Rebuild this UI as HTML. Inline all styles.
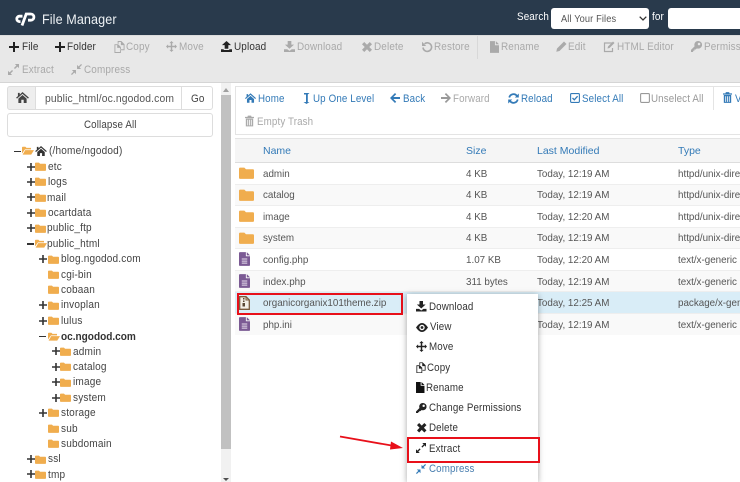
<!DOCTYPE html>
<html><head><meta charset="utf-8">
<style>
html,body{margin:0;padding:0;width:740px;height:482px;overflow:hidden}
body{position:relative;background:#fff;font-family:"Liberation Sans",sans-serif;font-size:11px;color:#333}
#w{position:absolute;left:0;top:0;width:740px;height:482px;overflow:hidden;filter:blur(.3px)}
#w div,#w span,#w svg{position:absolute;box-sizing:border-box}
.t{white-space:nowrap;line-height:14px;font-family:"Liberation Sans",sans-serif;font-size:11.3px;letter-spacing:.15px;transform:scaleX(.88);transform-origin:0 50%}
.tb{color:#333}.dis{color:#a9a9a9}.bl{color:#337ab7}
.a{white-space:nowrap;line-height:14px;font-family:"Liberation Sans",sans-serif;font-size:10.5px;color:#555;margin-top:.5px;transform:scaleX(.935);transform-origin:0 50%}
.h{color:#337ab7;transform:none}
.tr{color:#444;font-size:11.3px;letter-spacing:.2px;transform:scaleX(.89)}
.m{color:#333;font-size:11.1px;letter-spacing:.15px}
</style></head><body>
<svg width="0" height="0" style="position:absolute">
<defs>
<symbol id="fo" viewBox="0 0 14 11"><path d="M0 1.5Q0 .5 1 .5H5L6.5 2H13Q14 2 14 3V10Q14 11 13 11H1Q0 11 0 10Z" fill="#f0ad4e"/></symbol>
<symbol id="op" viewBox="0 0 16 11"><path d="M0 1.5Q0 .5 1 .5H4.5L6 2H12V4H4L0 9.5Z" fill="#f0ad4e"/><path d="M4.3 5H16L12.3 11H.8Z" fill="#f0ad4e"/></symbol>
<symbol id="pl" viewBox="0 0 10 10"><path d="M4 0H6V4H10V6H6V10H4V6H0V4H4Z"/></symbol>
<symbol id="home" viewBox="0 0 14 12"><path d="M7 0L14 6.2 13 7.2 7 2 1 7.2 0 6.2 2 4.500V1H4V2.800ZM2.500 7.200L7 3.300 11.500 7.200V12H8.300V8.500H5.700V12H2.500Z"/></symbol>
<symbol id="php" viewBox="0 0 12 15"><path d="M0 1Q0 0 1 0H7.500V4.500H12V14Q12 15 11 15H1Q0 15 0 14Z" fill="#7b5a94"/><path d="M8.500 0L12 3.500H8.500Z" fill="#7b5a94"/><path d="M3 7H9V8H3ZM3 9.300H9V10.300H3ZM3 11.500H9V12.500H3Z" fill="#e8e0ee"/></symbol>
<symbol id="dl" viewBox="0 0 12 12"><path d="M4 0H8V4H11L6 8.500 1 4H4ZM0 9H3.500L6 10.800 8.500 9H12V12H0Z"/></symbol>
<symbol id="ul" viewBox="0 0 12 12"><path d="M6 0L11 4.500H8V8.500H4V4.500H1ZM0 9H3V9.800H9V9H12V12H0Z"/></symbol>
<symbol id="mv" viewBox="0 0 12 12"><path d="M6 0L8.300 2.300H6.800V5.200H9.700V3.700L12 6 9.700 8.300V6.800H6.800V9.700H8.300L6 12 3.700 9.700H5.200V6.800H2.300V8.300L0 6 2.300 3.700V5.200H5.200V2.300H3.700Z"/></symbol>
<symbol id="cp" viewBox="0 0 12 13"><path d="M4 0H8L11.500 3.500V10H7V9H10.500V4.500H7.500V1H5V3H4ZM.5 3.500H4.500L7.500 6.500V13H.5ZM1.500 4.500V12H6.500V7.500H3.500V4.500Z" fill-rule="evenodd"/></symbol>
<symbol id="ex" viewBox="0 0 12 12"><path d="M7.500 0H12V4.500L10.300 2.800 7.600 5.500 6.500 4.400 9.200 1.700ZM5.500 7.600L2.800 10.300 4.500 12H0V7.500L1.700 9.200 4.400 6.500Z"/></symbol>
<symbol id="cm" viewBox="0 0 12 12"><path d="M11 0L12 1 9.300 3.700 11 5.400H6.600V1L8.300 2.700ZM5.400 6.600V11L3.700 9.300 1 12 0 11 2.700 8.300 1 6.600Z"/></symbol>
<symbol id="x" viewBox="0 0 11 11"><path d="M2.500 0L5.500 3 8.500 0 11 2.500 8 5.500 11 8.500 8.500 11 5.500 8 2.500 11 0 8.500 3 5.500 0 2.500Z"/></symbol>
<symbol id="rn" viewBox="0 0 10 13"><path d="M0 0H5.500V4.500H10V13H0ZM6.500 0L10 3.500H6.500Z"/></symbol>
<symbol id="key" viewBox="0 0 13 13"><path d="M8.500 0A4.500 4.500 0 1 1 7 8.700L5.500 10H4V11.500H2.500V13H0V10.500L4.300 6.200A4.500 4.500 0 0 1 8.500 0ZM9.500 2A1.500 1.500 0 1 0 9.500 5 1.500 1.500 0 0 0 9.500 2Z" fill-rule="evenodd"/></symbol>
<symbol id="tr" viewBox="0 0 11 13"><path d="M3.500 0H7.500L8 1.500H11V3H0V1.500H3ZM1 3.500H10V13H1ZM2.800 5V11.800H3.800V5ZM5 5V11.800H6V5ZM7.200 5V11.800H8.200V5Z" fill-rule="evenodd"/></symbol>
</defs></svg>
<div id="w">
<!-- header -->
<div style="left:0;top:0;width:740px;height:35px;background:#293a4c"></div>
<svg style="left:14px;top:12px" width="22" height="14" viewBox="0 0 22 14"><path d="M8.500 4.200H5.500A2.700 2.700 0 0 0 5.500 9.600H6.500" fill="none" stroke="#fff" stroke-width="2.800"/><path d="M8 13.500L12.200 2H16.800A3 3 0 0 1 16.800 8.200H14" fill="none" stroke="#fff" stroke-width="2.800"/></svg>
<div class="t" style="left:42px;top:11px;font-size:14px;line-height:16px;letter-spacing:.1px;color:#eef2f5;transform:scaleX(.9)">File Manager</div>
<div class="t" style="left:517px;top:10px;color:#fff;font-size:11.2px">Search</div>
<div style="left:551px;top:8px;width:98px;height:20.500px;background:#fff;border-radius:3px"></div>
<div class="t" style="left:561px;top:12px;font-size:10.500px;color:#555">All Your Files</div>
<svg style="left:639px;top:16px" width="8" height="5" viewBox="0 0 8 5"><path d="M.7.7L4 4 7.300.7" fill="none" stroke="#333" stroke-width="1.300"/></svg>
<div class="t" style="left:652px;top:10px;color:#fff">for</div>
<div style="left:668px;top:8px;width:72px;height:20.500px;background:#fff;border-radius:3px 0 0 3px"></div>

<!-- toolbar -->
<div style="left:0;top:35px;width:740px;height:48px;background:#e8e8e8;border-top:1px solid #dcdcdc;border-bottom:1px solid #d5d5d5"></div>
<svg style="left:9px;top:42px" width="10" height="10" fill="#222"><use href="#pl"/></svg><div class="t tb" style="left:21.500px;top:40px">File</div>
<svg style="left:55px;top:42px" width="10" height="10" fill="#222"><use href="#pl"/></svg><div class="t tb" style="left:67px;top:40px">Folder</div>
<svg style="left:114px;top:41px" width="11" height="12" fill="#aaa"><use href="#cp"/></svg><div class="t dis" style="left:125.500px;top:40px">Copy</div>
<svg style="left:166px;top:41px" width="11" height="11" fill="#aaa"><use href="#mv"/></svg><div class="t dis" style="left:178.500px;top:40px">Move</div>
<svg style="left:221px;top:41px" width="11" height="11" fill="#222"><use href="#ul"/></svg><div class="t tb" style="left:234px;top:40px">Upload</div>
<svg style="left:284px;top:41px" width="11" height="11" fill="#aaa"><use href="#dl"/></svg><div class="t dis" style="left:297px;top:40px">Download</div>
<svg style="left:362px;top:42px" width="10" height="10" fill="#aaa"><use href="#x"/></svg><div class="t dis" style="left:374px;top:40px">Delete</div>
<svg style="left:421px;top:41px" width="12" height="12" viewBox="0 0 12 12"><path d="M2 6.500A4.300 4.300 0 1 0 3.500 2.800" fill="none" stroke="#aaa" stroke-width="1.600"/><path d="M1 .8V5H5.200Z" fill="#aaa"/></svg><div class="t dis" style="left:433.500px;top:40px">Restore</div>
<div style="left:477px;top:36px;width:1px;height:23px;background:#d8d8d8"></div>
<svg style="left:490px;top:41px" width="9" height="12" fill="#aaa"><use href="#rn"/></svg><div class="t dis" style="left:500.500px;top:40px">Rename</div>
<svg style="left:556px;top:41px" width="11" height="11" viewBox="0 0 11 11"><path d="M8 .5L10.500 3 3.500 10 .3 10.700 1 7.500Z" fill="#aaa"/></svg><div class="t dis" style="left:568px;top:40px">Edit</div>
<svg style="left:603px;top:41px" width="12" height="12" viewBox="0 0 12 12"><path d="M9 2H1.500V10.500H9.500V7" fill="none" stroke="#aaa" stroke-width="1.200"/><path d="M10 .5L11.500 2 6.500 7 4.500 7.500 5 5.500Z" fill="#aaa"/></svg><div class="t dis" style="left:617px;top:40px">HTML Editor</div>
<svg style="left:691px;top:41px" width="11" height="11" fill="#aaa"><use href="#key"/></svg><div class="t dis" style="left:704px;top:40px">Permissions</div>
<svg style="left:8px;top:64px" width="11" height="11" fill="#aaa"><use href="#ex"/></svg><div class="t dis" style="left:21.500px;top:63px">Extract</div>
<svg style="left:71px;top:64px" width="11" height="11" fill="#aaa"><use href="#cm"/></svg><div class="t dis" style="left:83.500px;top:63px">Compress</div>

<!-- left top -->
<div style="left:7px;top:86px;width:206px;height:24px;border:1px solid #ddd;border-radius:3px;background:#fff"></div>
<div style="left:7px;top:86px;width:29px;height:24px;background:#eee;border:1px solid #ddd;border-radius:3px 0 0 3px"></div>
<svg style="left:15.500px;top:92px" width="13" height="11" fill="#444"><use href="#home"/></svg>
<div class="t" style="left:44.500px;top:91.500px;color:#555;font-size:11.100px;transform:scaleX(.93)">public_html/oc.ngodod.com</div>
<div style="left:181px;top:87px;width:1px;height:22px;background:#ddd"></div>
<div class="t" style="left:190.500px;top:91.500px;color:#444;font-size:11.300px">Go</div>
<div style="left:7px;top:113px;width:206px;height:24px;border:1px solid #ddd;border-radius:3px;background:#fff"></div>
<div class="t" style="left:83.500px;top:118px;color:#444;font-size:11.100px">Collapse All</div>

<!-- tree -->
<div style="left:14px;top:150.500px;width:7px;height:1.800px;background:#333"></div>
<svg style="left:22px;top:146px" width="12" height="9"><use href="#op"/></svg>
<svg style="left:35px;top:145.500px" width="12" height="10" fill="#333"><use href="#home"/></svg>
<div class="t tr" style="left:48.500px;top:144px">(/home/ngodod)</div>

<svg style="left:26.500px;top:162.500px" width="8" height="8" fill="#333"><use href="#pl"/></svg><svg style="left:34.500px;top:161.500px" width="11" height="9"><use href="#fo"/></svg><div class="t tr" style="left:47.500px;top:159.500px">etc</div>
<svg style="left:26.500px;top:178px" width="8" height="8" fill="#333"><use href="#pl"/></svg><svg style="left:34.500px;top:177px" width="11" height="9"><use href="#fo"/></svg><div class="t tr" style="left:47.500px;top:175px">logs</div>
<svg style="left:26.500px;top:193px" width="8" height="8" fill="#333"><use href="#pl"/></svg><svg style="left:34.500px;top:192.500px" width="11" height="9"><use href="#fo"/></svg><div class="t tr" style="left:46.500px;top:190.500px">mail</div>
<svg style="left:26.500px;top:209px" width="8" height="8" fill="#333"><use href="#pl"/></svg><svg style="left:34.500px;top:208px" width="11" height="9"><use href="#fo"/></svg><div class="t tr" style="left:47.500px;top:206px">ocartdata</div>
<svg style="left:26.500px;top:224px" width="8" height="8" fill="#333"><use href="#pl"/></svg><svg style="left:34.500px;top:223.500px" width="11" height="9"><use href="#fo"/></svg><div class="t tr" style="left:46.500px;top:221px">public_ftp</div>
<div style="left:26.500px;top:243px;width:7px;height:1.800px;background:#333"></div><svg style="left:35px;top:239px" width="12" height="9"><use href="#op"/></svg><div class="t tr" style="left:46.500px;top:236.500px">public_html</div>

<svg style="left:39px;top:255px" width="8" height="8" fill="#333"><use href="#pl"/></svg><svg style="left:47.500px;top:254.500px" width="11" height="9"><use href="#fo"/></svg><div class="t tr" style="left:60.500px;top:252px">blog.ngodod.com</div>
<svg style="left:47.500px;top:270px" width="11" height="9"><use href="#fo"/></svg><div class="t tr" style="left:60.500px;top:267.500px">cgi-bin</div>
<svg style="left:47.500px;top:285px" width="11" height="9"><use href="#fo"/></svg><div class="t tr" style="left:60.500px;top:283px">cobaan</div>
<svg style="left:39px;top:301px" width="8" height="8" fill="#333"><use href="#pl"/></svg><svg style="left:47.500px;top:300.500px" width="11" height="9"><use href="#fo"/></svg><div class="t tr" style="left:60.500px;top:298px">invoplan</div>
<svg style="left:39px;top:316.500px" width="8" height="8" fill="#333"><use href="#pl"/></svg><svg style="left:47.500px;top:315.500px" width="11" height="9"><use href="#fo"/></svg><div class="t tr" style="left:60.500px;top:313.500px">lulus</div>
<div style="left:39px;top:335.500px;width:7px;height:1.800px;background:#333"></div><svg style="left:47.500px;top:331.500px" width="12" height="9"><use href="#op"/></svg><div class="t tr" style="left:60.500px;top:329.500px;font-weight:bold;letter-spacing:0;color:#333">oc.ngodod.com</div>

<svg style="left:51.500px;top:347px" width="8" height="8" fill="#333"><use href="#pl"/></svg><svg style="left:60px;top:346.500px" width="11" height="9"><use href="#fo"/></svg><div class="t tr" style="left:73px;top:344.500px">admin</div>
<svg style="left:51.500px;top:363px" width="8" height="8" fill="#333"><use href="#pl"/></svg><svg style="left:60px;top:362px" width="11" height="9"><use href="#fo"/></svg><div class="t tr" style="left:73px;top:360px">catalog</div>
<svg style="left:51.500px;top:378px" width="8" height="8" fill="#333"><use href="#pl"/></svg><svg style="left:60px;top:377.500px" width="11" height="9"><use href="#fo"/></svg><div class="t tr" style="left:73px;top:375px">image</div>
<svg style="left:51.500px;top:393.500px" width="8" height="8" fill="#333"><use href="#pl"/></svg><svg style="left:60px;top:393px" width="11" height="9"><use href="#fo"/></svg><div class="t tr" style="left:73px;top:390.500px">system</div>

<svg style="left:39px;top:409px" width="8" height="8" fill="#333"><use href="#pl"/></svg><svg style="left:47.500px;top:408px" width="11" height="9"><use href="#fo"/></svg><div class="t tr" style="left:60.500px;top:406px">storage</div>
<svg style="left:47.500px;top:423.500px" width="11" height="9"><use href="#fo"/></svg><div class="t tr" style="left:60.500px;top:421.500px">sub</div>
<svg style="left:47.500px;top:438.500px" width="11" height="9"><use href="#fo"/></svg><div class="t tr" style="left:60.500px;top:436.500px">subdomain</div>
<svg style="left:26.500px;top:455px" width="8" height="8" fill="#333"><use href="#pl"/></svg><svg style="left:34.500px;top:454.500px" width="11" height="9"><use href="#fo"/></svg><div class="t tr" style="left:47.500px;top:452px">ssl</div>
<svg style="left:26.500px;top:470px" width="8" height="8" fill="#333"><use href="#pl"/></svg><svg style="left:34.500px;top:469.500px" width="11" height="9"><use href="#fo"/></svg><div class="t tr" style="left:47.500px;top:467.500px">tmp</div>

<!-- scrollbar -->
<div style="left:221px;top:83px;width:10px;height:399px;background:#f1f1f1"></div>
<div style="left:221px;top:95px;width:10px;height:354px;background:#c1c1c1"></div>
<svg style="left:223px;top:88px" width="6" height="4"><path d="M3 0L6 4H0Z" fill="#a0a0a0"/></svg>
<svg style="left:223px;top:478px" width="6" height="3"><path d="M0 0H6L3 3Z" fill="#505050"/></svg>

<!-- right top bar -->
<div style="left:234.500px;top:86px;width:506px;height:49px;border:1px solid #e4e4e4;border-right:0;background:#fff"></div>
<svg style="left:245px;top:93px" width="11" height="10" fill="#337ab7"><use href="#home"/></svg><div class="t bl" style="left:258px;top:91.500px;font-size:11.100px">Home</div>
<svg style="left:303px;top:92.500px" width="7" height="11" viewBox="0 0 7 11"><path d="M1 0H6.500L4.800 1.500V9H6.500L3.500 11 .5 9H3V1.500H1Z" fill="#337ab7"/></svg><div class="t bl" style="left:312.500px;top:91.500px;font-size:11.100px">Up One Level</div>
<svg style="left:390px;top:93px" width="10" height="10" viewBox="0 0 10 10"><path d="M5 0L6.200 1.200 3.400 4H10V6H3.400L6.200 8.800 5 10 0 5Z" fill="#337ab7"/></svg><div class="t bl" style="left:402.500px;top:91.500px;font-size:11.100px">Back</div>
<svg style="left:441px;top:93px" width="10" height="10" viewBox="0 0 10 10"><path d="M5 0L3.800 1.200 6.600 4H0V6H6.600L3.800 8.800 5 10 10 5Z" fill="#999"/></svg><div class="t dis" style="left:453px;top:91.500px;font-size:11.100px">Forward</div>
<svg style="left:508px;top:92.500px" width="11" height="11" viewBox="0 0 11 11"><path d="M1.300 4.500A4.300 4.300 0 0 1 9 3M9.700 6.500A4.300 4.300 0 0 1 2 8" fill="none" stroke="#337ab7" stroke-width="1.700"/><path d="M10.800 .5V4.500H6.800ZM.2 10.500V6.500H4.200Z" fill="#337ab7"/></svg><div class="t bl" style="left:521px;top:91.500px;font-size:11.100px">Reload</div>
<svg style="left:570px;top:93px" width="10" height="10" viewBox="0 0 10 10"><rect x=".6" y=".6" width="8.800" height="8.800" rx="1" fill="none" stroke="#337ab7" stroke-width="1.100"/><path d="M2.500 5L4.300 6.800 7.600 3.200" fill="none" stroke="#337ab7" stroke-width="1.300"/></svg><div class="t bl" style="left:581.500px;top:91.500px;font-size:11.100px">Select All</div>
<svg style="left:640px;top:93px" width="10" height="10" viewBox="0 0 10 10"><rect x=".6" y=".6" width="8.800" height="8.800" rx="1" fill="none" stroke="#999" stroke-width="1.100"/></svg><div class="t" style="left:651px;top:91.500px;font-size:11.100px;color:#999">Unselect All</div>
<div style="left:713px;top:87px;width:1px;height:23px;background:#e4e4e4"></div>
<svg style="left:723px;top:92px" width="9" height="11" fill="#337ab7"><use href="#tr"/></svg><div class="t bl" style="left:735px;top:91.500px;font-size:11.100px">View Trash</div>
<svg style="left:245px;top:115px" width="9" height="12" fill="#aaa"><use href="#tr"/></svg><div class="t dis" style="left:256.500px;top:114.500px;font-size:11.100px">Empty Trash</div>

<!-- table -->
<div style="left:234.500px;top:138px;width:506px;height:1px;background:#e4e4e4"></div>
<div style="left:235px;top:139px;width:505px;height:23.500px;background:#f5f5f5;border-bottom:1.500px solid #ddd"></div>
<div style="left:235px;top:184px;width:505px;height:21.500px;background:#f9f9f9"></div>
<div style="left:235px;top:227px;width:505px;height:21.500px;background:#f9f9f9"></div>
<div style="left:235px;top:270px;width:505px;height:21.500px;background:#f9f9f9"></div>
<div style="left:235px;top:313.500px;width:505px;height:21.500px;background:#f9f9f9"></div>
<div style="left:235px;top:292px;width:505px;height:21.500px;background:#d9edf7"></div>
<div style="left:235px;top:183.500px;width:505px;height:1px;background:#eee"></div>
<div style="left:235px;top:205px;width:505px;height:1px;background:#eee"></div>
<div style="left:235px;top:226.500px;width:505px;height:1px;background:#eee"></div>
<div style="left:235px;top:248px;width:505px;height:1px;background:#eee"></div>
<div style="left:235px;top:269.500px;width:505px;height:1px;background:#eee"></div>
<div style="left:235px;top:291px;width:505px;height:1px;background:#eee"></div>
<div style="left:235px;top:313px;width:505px;height:1px;background:#eee"></div>

<div class="a h" style="left:263px;top:143px">Name</div><div class="a h" style="left:466px;top:143px">Size</div><div class="a h" style="left:537px;top:143px">Last Modified</div><div class="a h" style="left:678px;top:143px">Type</div>

<svg style="left:238.500px;top:167px" width="15" height="12"><use href="#fo"/></svg><div class="a" style="left:263px;top:166px">admin</div><div class="a" style="left:466px;top:166px">4 KB</div><div class="a" style="left:537px;top:166px">Today, 12:19 AM</div><div class="a" style="left:678px;top:166px">httpd/unix-directory</div>
<svg style="left:238.500px;top:188.500px" width="15" height="12"><use href="#fo"/></svg><div class="a" style="left:263px;top:187.500px">catalog</div><div class="a" style="left:466px;top:187.500px">4 KB</div><div class="a" style="left:537px;top:187.500px">Today, 12:19 AM</div><div class="a" style="left:678px;top:187.500px">httpd/unix-directory</div>
<svg style="left:238.500px;top:210px" width="15" height="12"><use href="#fo"/></svg><div class="a" style="left:263px;top:209px">image</div><div class="a" style="left:466px;top:209px">4 KB</div><div class="a" style="left:537px;top:209px">Today, 12:20 AM</div><div class="a" style="left:678px;top:209px">httpd/unix-directory</div>
<svg style="left:238.500px;top:231.500px" width="15" height="12"><use href="#fo"/></svg><div class="a" style="left:263px;top:230.500px">system</div><div class="a" style="left:466px;top:230.500px">4 KB</div><div class="a" style="left:537px;top:230.500px">Today, 12:19 AM</div><div class="a" style="left:678px;top:230.500px">httpd/unix-directory</div>
<svg style="left:238.500px;top:252px" width="11" height="14"><use href="#php"/></svg><div class="a" style="left:263px;top:252px">config.php</div><div class="a" style="left:466px;top:252px">1.07 KB</div><div class="a" style="left:537px;top:252px">Today, 12:20 AM</div><div class="a" style="left:678px;top:252px">text/x-generic</div>
<svg style="left:238.500px;top:273.500px" width="11" height="14"><use href="#php"/></svg><div class="a" style="left:263px;top:274px">index.php</div><div class="a" style="left:466px;top:274px">311 bytes</div><div class="a" style="left:537px;top:274px">Today, 12:19 AM</div><div class="a" style="left:678px;top:274px">text/x-generic</div>
<svg style="left:238.500px;top:295.500px" width="11" height="14" viewBox="0 0 11 14"><path d="M.7.7H7L10.300 4V13.300H.7Z" fill="#f4efe6" stroke="#7a5a3c" stroke-width="1.300"/><path d="M7 .7V4H10.300" fill="none" stroke="#7a5a3c"/><path d="M4 2H5.500V3.500H4ZM4 4.500H5.500V6H4ZM3.500 7H6V10.500H3.500Z" fill="#5a4632"/></svg><div class="a" style="left:263px;top:295px">organicorganix101theme.zip</div><div class="a" style="left:537px;top:295px">Today, 12:25 AM</div><div class="a" style="left:678px;top:295px">package/x-generic</div>
<svg style="left:238.500px;top:317px" width="11" height="14"><use href="#php"/></svg><div class="a" style="left:263px;top:317px">php.ini</div><div class="a" style="left:537px;top:317px">Today, 12:19 AM</div><div class="a" style="left:678px;top:317px">text/x-generic</div>

<!-- red row box -->
<div style="left:236.500px;top:292.500px;width:166px;height:22px;border:2.300px solid #e8101a"></div>

<!-- context menu -->
<div style="left:407px;top:294px;width:131px;height:188px;background:#fff;box-shadow:0 1px 6px rgba(0,0,0,.35)"></div>
<svg style="left:416px;top:301px" width="10.500" height="10.500" fill="#222"><use href="#dl"/></svg><div class="t m" style="left:428.500px;top:299.500px">Download</div>
<svg style="left:415.500px;top:323px" width="12" height="9" viewBox="0 0 12 9"><path d="M0 4.500Q3 0 6 0T12 4.500Q9 9 6 9T0 4.500ZM6 1.800A2.700 2.700 0 1 0 6 7.200 2.700 2.700 0 0 0 6 1.800Z" fill="#222" fill-rule="evenodd"/><circle cx="6" cy="4.500" r="1.400" fill="#222"/></svg><div class="t m" style="left:429.500px;top:320px">View</div>
<svg style="left:416px;top:341px" width="11" height="11" fill="#222"><use href="#mv"/></svg><div class="t m" style="left:428.500px;top:340px">Move</div>
<svg style="left:416px;top:361.500px" width="10" height="11.500" fill="#222"><use href="#cp"/></svg><div class="t m" style="left:427px;top:361px">Copy</div>
<svg style="left:416px;top:382px" width="8.500" height="11" fill="#111"><use href="#rn"/></svg><div class="t m" style="left:426px;top:381px">Rename</div>
<svg style="left:416px;top:402.500px" width="10.500" height="10.500" fill="#222"><use href="#key"/></svg><div class="t m" style="left:428.500px;top:401px">Change Permissions</div>
<svg style="left:417px;top:423px" width="9.500" height="9.500" fill="#222"><use href="#x"/></svg><div class="t m" style="left:428.500px;top:421px">Delete</div>
<svg style="left:416px;top:443px" width="10" height="10" fill="#222"><use href="#ex"/></svg><div class="t m" style="left:428.500px;top:442px">Extract</div>
<svg style="left:416px;top:464px" width="10" height="10" fill="#337ab7"><use href="#cm"/></svg><div class="t m" style="left:428.500px;top:462px;color:#4a7fb0">Compress</div>

<!-- red extract box -->
<div style="left:407px;top:437px;width:133px;height:26px;border:2.300px solid #e8101a"></div>
<!-- arrow -->
<svg style="left:335px;top:430px" width="75" height="28" viewBox="0 0 75 28"><path d="M5 6.500L58 15.800" stroke="#e8101a" stroke-width="1.800" fill="none"/><path d="M68 18L56 11.500 55 19.500Z" fill="#e8101a"/></svg>
</div>
</body></html>
